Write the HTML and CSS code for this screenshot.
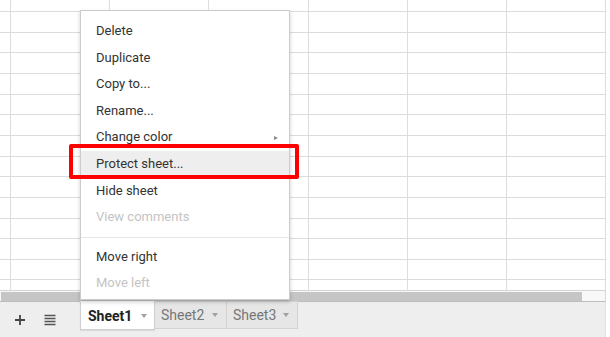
FILE: index.html
```html
<!DOCTYPE html>
<html>
<head>
<meta charset="utf-8">
<link rel="stylesheet" href="styles.css">
</head>
<body>
<div class="app">
  <div class="grid">
    <div class="c"></div><div class="c"></div><div class="c"></div><div class="c"></div><div class="c"></div><div class="c"></div><div class="c"></div>
    <div class="c"></div><div class="c"></div><div class="c"></div><div class="c"></div><div class="c"></div><div class="c"></div><div class="c"></div>
    <div class="c"></div><div class="c"></div><div class="c"></div><div class="c"></div><div class="c"></div><div class="c"></div><div class="c"></div>
    <div class="c"></div><div class="c"></div><div class="c"></div><div class="c"></div><div class="c"></div><div class="c"></div><div class="c"></div>
    <div class="c"></div><div class="c"></div><div class="c"></div><div class="c"></div><div class="c"></div><div class="c"></div><div class="c"></div>
    <div class="c"></div><div class="c"></div><div class="c"></div><div class="c"></div><div class="c"></div><div class="c"></div><div class="c"></div>
    <div class="c"></div><div class="c"></div><div class="c"></div><div class="c"></div><div class="c"></div><div class="c"></div><div class="c"></div>
    <div class="c"></div><div class="c"></div><div class="c"></div><div class="c"></div><div class="c"></div><div class="c"></div><div class="c"></div>
    <div class="c"></div><div class="c"></div><div class="c"></div><div class="c"></div><div class="c"></div><div class="c"></div><div class="c"></div>
    <div class="c"></div><div class="c"></div><div class="c"></div><div class="c"></div><div class="c"></div><div class="c"></div><div class="c"></div>
    <div class="c"></div><div class="c"></div><div class="c"></div><div class="c"></div><div class="c"></div><div class="c"></div><div class="c"></div>
    <div class="c"></div><div class="c"></div><div class="c"></div><div class="c"></div><div class="c"></div><div class="c"></div><div class="c"></div>
    <div class="c"></div><div class="c"></div><div class="c"></div><div class="c"></div><div class="c"></div><div class="c"></div><div class="c"></div>
    <div class="c"></div><div class="c"></div><div class="c"></div><div class="c"></div><div class="c"></div><div class="c"></div><div class="c"></div>
    <div class="c last"></div><div class="c last"></div><div class="c last"></div><div class="c last"></div><div class="c last"></div><div class="c last"></div><div class="c last"></div>
  </div>
  <div class="hscroll"><div class="thumb"></div></div>
  <div class="tabbar">
    <div class="tools">
      <svg class="ico" width="14" height="14" viewBox="0 0 14 14"><path d="M7 2v10M2 7h10" stroke="#444" stroke-width="1.8" fill="none"/></svg>
      <svg class="ico" width="14" height="14" viewBox="0 0 14 14"><path d="M1.5 2.5h11M1.5 5.5h11M1.5 8.5h11M1.5 11.5h11" stroke="#555" stroke-width="1.3" fill="none"/></svg>
    </div>
    <div class="tabs">
      <div class="tab active">Sheet1<span class="caret"></span></div>
      <div class="tab">Sheet2<span class="caret"></span></div>
      <div class="tab">Sheet3<span class="caret"></span></div>
    </div>
  </div>
  <div class="menu">
    <div class="item">Delete</div>
    <div class="item">Duplicate</div>
    <div class="item">Copy to...</div>
    <div class="item">Rename...</div>
    <div class="item sub">Change color<span class="arrow"></span></div>
    <div class="item hl">Protect sheet...</div>
    <div class="item">Hide sheet</div>
    <div class="item dis">View comments</div>
    <div class="sep"></div>
    <div class="item">Move right</div>
    <div class="item dis">Move left</div>
  </div>
  <div class="callout"></div>
</div>
</body>
</html>
```
FILE: styles.css
```css
html, body {
  margin: 0;
  padding: 0;
  background: #fff;
}
body {
  width: 610px;
  height: 337px;
  overflow: hidden;
  font-family: Roboto, "Liberation Sans", Arial, sans-serif;
}
.app {
  position: relative;
  width: 606px;
  height: 337px;
  display: flex;
  flex-direction: column;
}
.grid {
  display: grid;
  grid-template-columns: 11px 99px 99px 100px 99px 99px 99px;
  grid-template-rows: 12px 21px 20px 21px 21px 20px 21px 21px 20px 21px 21px 20px 21px 20px 11px;
  background: #fff;
}
.c {
  box-sizing: border-box;
  border-right: 1px solid #dedede;
  border-bottom: 1px solid #dcdcdc;
}
.c.last {
  border-bottom-color: #d4d4d4;
}
.hscroll {
  height: 10px;
  background: #f8f8f8;
  border-right: 1px solid #d9d9d9;
  display: flex;
  align-items: center;
}
.thumb {
  width: 581px;
  height: 9px;
  margin-left: 1px;
  background: #c5c5c5;
}
.tabbar {
  flex: 1;
  background: #eeeeee;
  border-top: 1px solid #bdbdbd;
  border-right: 1px solid #e0e0e0;
  display: flex;
  align-items: flex-start;
}
.tools {
  width: 80px;
  display: flex;
  gap: 16px;
  padding: 11px 0 0 13px;
  box-sizing: border-box;
}
.ico { display: block; }
.tabs {
  display: flex;
  margin-top: -1px;
}
.tab {
  height: 28px;
  box-sizing: border-box;
  display: flex;
  align-items: center;
  padding: 0 0 0 6px;
  font-size: 14px;
  color: #777;
  background: #e6e6e6;
  border: 1px solid #d2d2d2;
  border-left: none;
  width: 72px;
}
.tab:nth-child(3) { width: 71px; }
.tab.active {
  background: #fff;
  color: #222;
  font-weight: bold;
  border: 1px solid #cfcfcf;
  border-top-color: #fff;
  width: 75px;
  padding-left: 7px;
  height: 29px;
  box-shadow: 0 1px 1px rgba(0,0,0,0.08);
}
.caret {
  width: 0;
  height: 0;
  border-left: 3.5px solid transparent;
  border-right: 3.5px solid transparent;
  border-top: 4px solid #a0a0a0;
  margin-left: auto;
  margin-right: 8px;
}
.tab.active .caret { margin-right: 7px; }
.menu {
  position: absolute;
  left: 80px;
  top: 10px;
  width: 210px;
  height: 290px;
  box-sizing: border-box;
  background: #fff;
  border: 1px solid rgba(0,0,0,0.2);
  box-shadow: 0 2px 4px rgba(0,0,0,0.2);
  padding-top: 7px;
  z-index: 2;
}
.item {
  height: 26.6px;
  line-height: 26.6px;
  padding-left: 15px;
  font-size: 13px;
  color: #333;
  display: flex;
  align-items: center;
  white-space: nowrap;
}
.item.hl { background: #eeeeee; }
.item.dis { color: #c4c4c4; }
.arrow {
  width: 0;
  height: 0;
  border-top: 2.5px solid transparent;
  border-bottom: 2.5px solid transparent;
  border-left: 4px solid #8a8a8a;
  margin-left: auto;
  margin-right: 11px;
  margin-top: 1px;
}
.sep {
  height: 1px;
  background: #e5e5e5;
  margin: 6px 0 6px;
}
.callout {
  position: absolute;
  left: 69px;
  top: 144px;
  width: 230px;
  height: 35px;
  box-sizing: border-box;
  border: 4px solid #ff0000;
  border-radius: 2px;
  z-index: 3;
}
```
